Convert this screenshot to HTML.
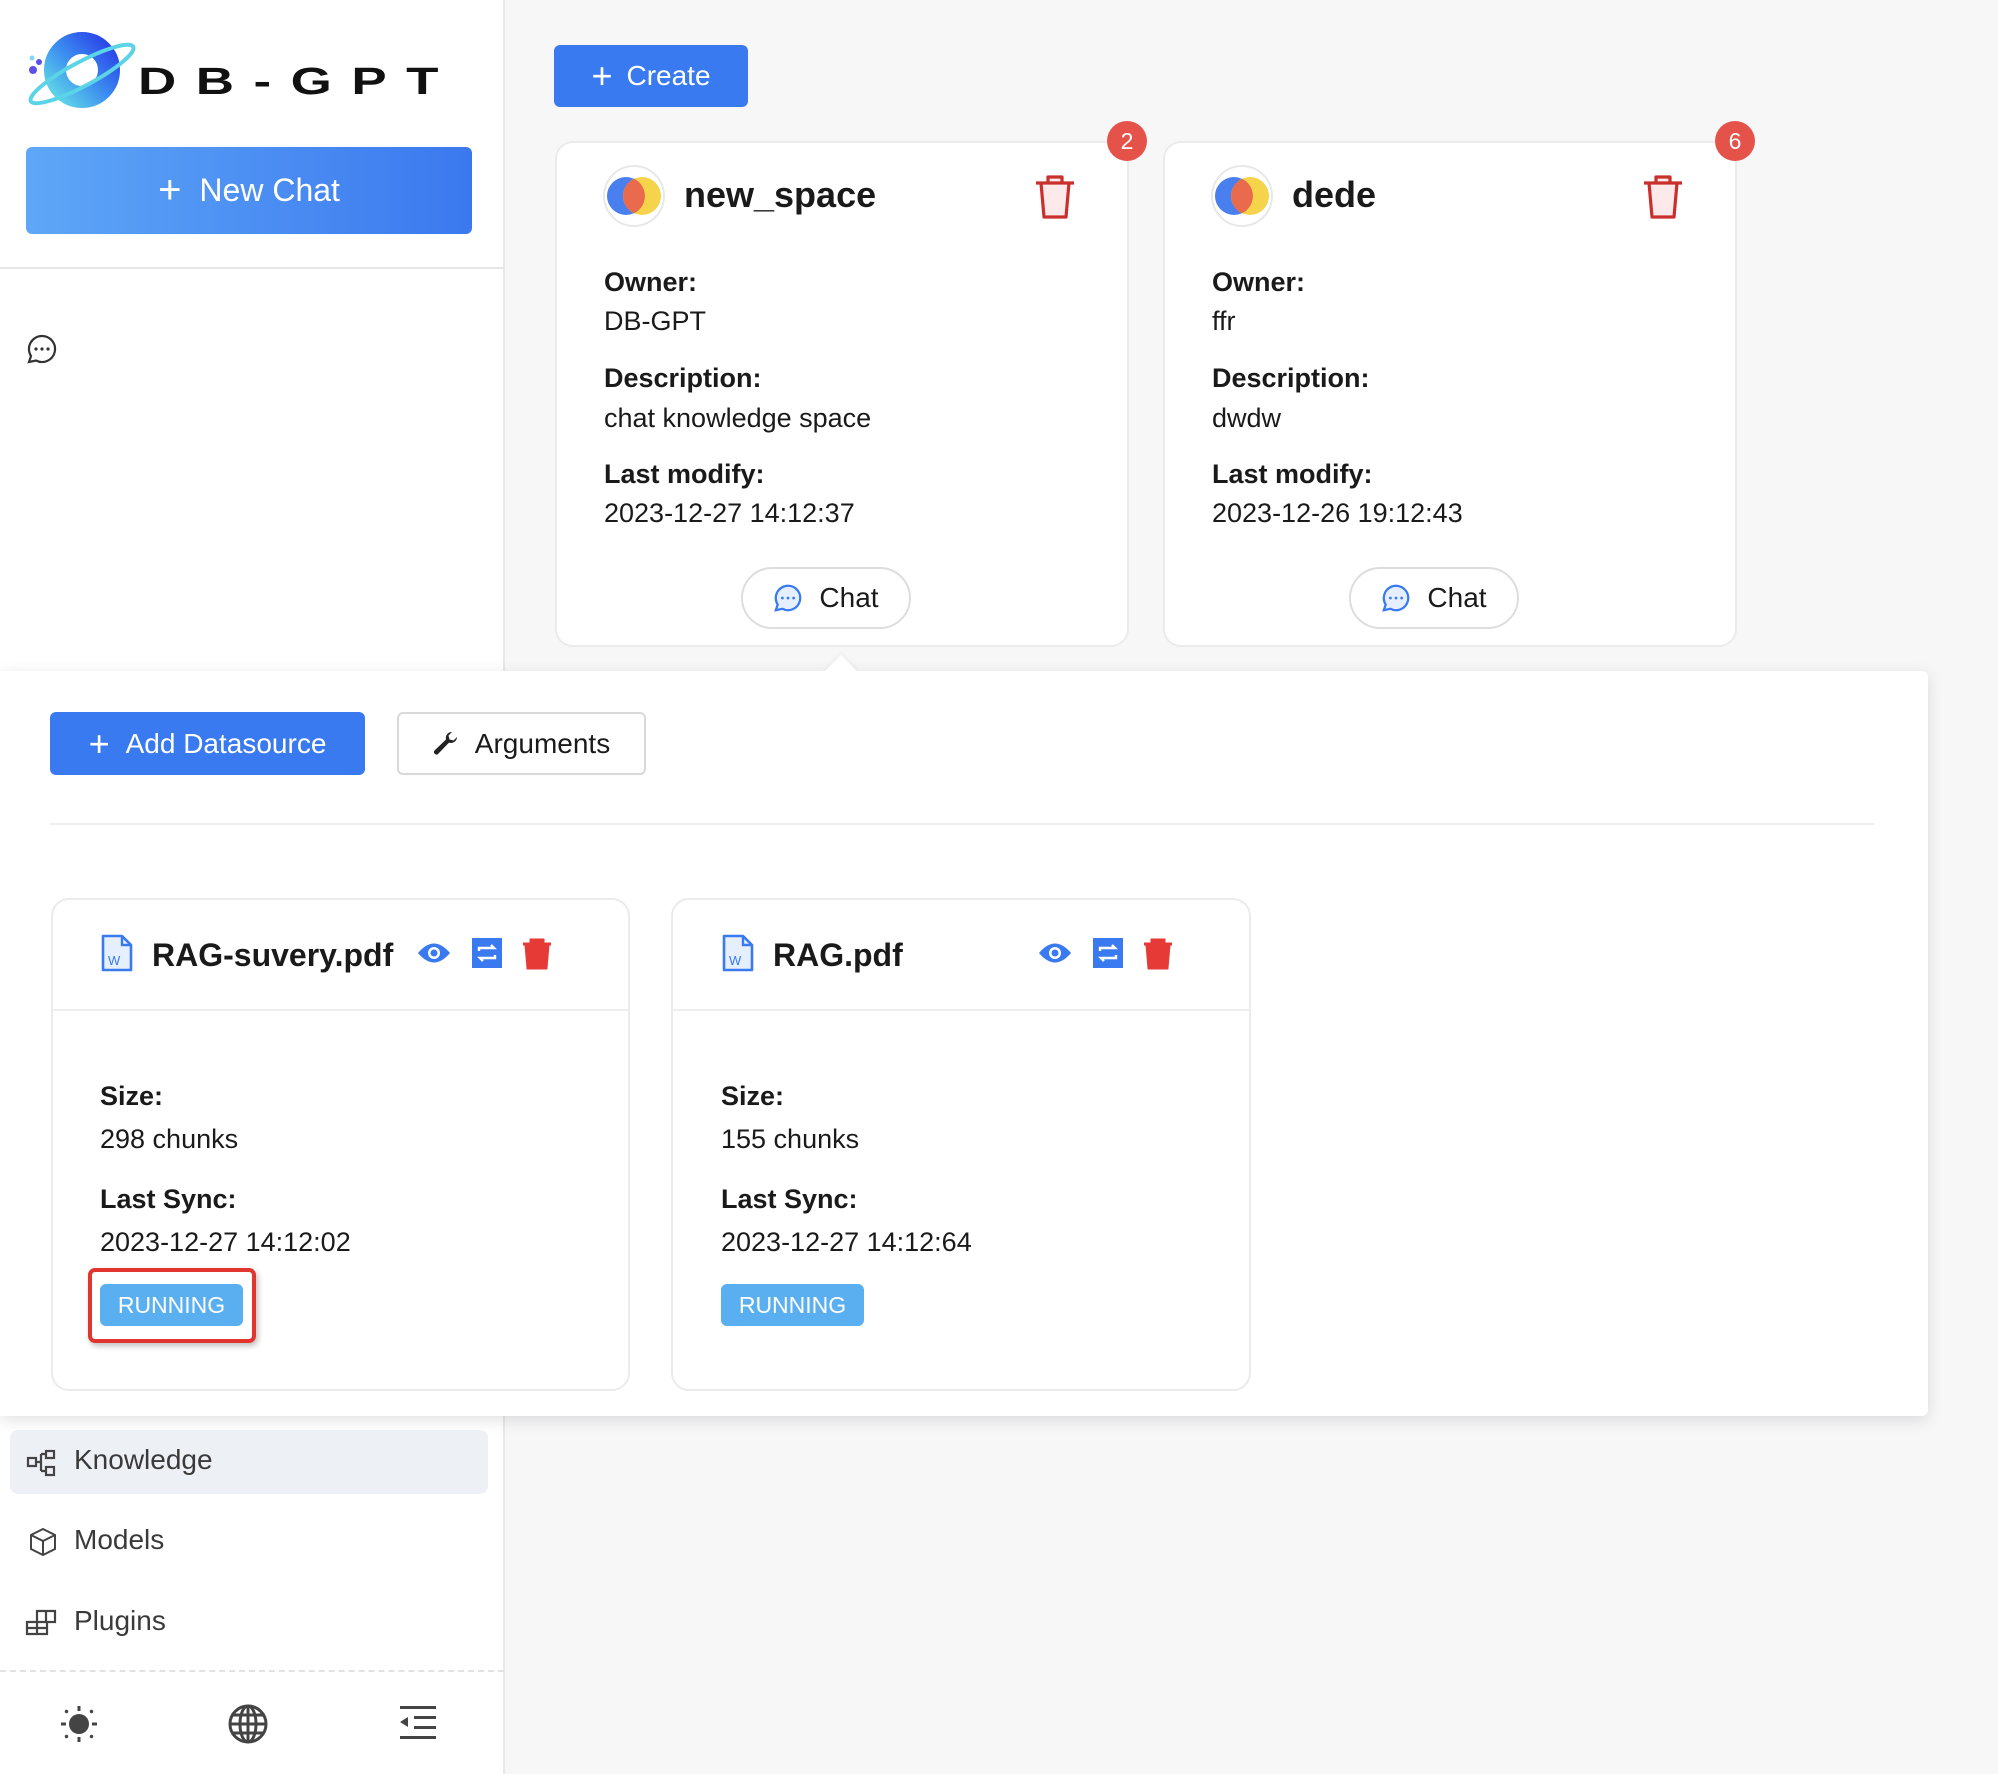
<!DOCTYPE html>
<html><head><meta charset="utf-8"><style>
*{box-sizing:border-box;margin:0;padding:0}
body{width:1998px;height:1774px;position:relative;overflow:hidden;background:#f7f7f8;font-family:"Liberation Sans",Arial,sans-serif;color:#1a1a1a}
.abs{position:absolute}
.side{left:0;top:0;width:505px;height:1774px;background:#fff;border-right:2px solid #e8e8e8}
.btn{display:flex;align-items:center;justify-content:center;color:#fff;border-radius:6px}
.card{background:#fff;border:2px solid #ebebeb;border-radius:18px}
.lbl{font-weight:bold;font-size:27px;position:absolute}
.val{font-size:27px;position:absolute}
.badge{width:40px;height:40px;border-radius:50%;background:#e5524a;color:#fff;font-size:23px;display:flex;align-items:center;justify-content:center}
.menu{font-size:28px;color:#3a3a3a;position:absolute;left:74px}
</style></head><body>
<div class="abs side"></div>
<!-- logo -->
<svg class="abs" style="left:24px;top:28px" width="440" height="85" viewBox="0 0 440 85">
<defs><linearGradient id="g1" x1="0" y1="1" x2="1" y2="0"><stop offset="0" stop-color="#5fd6e8"/><stop offset="0.5" stop-color="#3b8cf0"/><stop offset="1" stop-color="#2a44e8"/></linearGradient></defs>
<circle cx="58" cy="42" r="27" fill="none" stroke="url(#g1)" stroke-width="22"/>
<ellipse cx="58" cy="46" rx="58" ry="12" transform="rotate(-28 58 46)" fill="none" stroke="#5ad4e6" stroke-width="4"/>
<circle cx="9" cy="42" r="4" fill="#5a4fe8"/><circle cx="15" cy="34" r="3" fill="#5a4fe8"/><circle cx="8" cy="30" r="2.5" fill="#7fd8ec"/>
<text x="114" y="66" font-family="Liberation Sans" font-weight="bold" font-size="38" letter-spacing="14" textLength="320" lengthAdjust="spacingAndGlyphs" fill="#111">DB-GPT</text>
</svg>
<div class="abs btn" style="left:26px;top:147px;width:446px;height:87px;background:linear-gradient(90deg,#5ea7f7,#3b78ef);font-size:32px"><span style="font-size:40px;font-weight:300;margin-right:18px">+</span>New Chat</div>
<div class="abs" style="left:0;top:267px;width:504px;height:2px;background:#e6e6e6"></div>
<svg class="abs" style="left:26px;top:333px" width="32" height="32" viewBox="0 0 32 32"><path d="M16 3a13 13 0 1 1-6 24.5L3 29l2-6A13 13 0 0 1 16 3z" fill="none" stroke="#333" stroke-width="2.2"/><circle cx="10" cy="16" r="1.6" fill="#333"/><circle cx="16" cy="16" r="1.6" fill="#333"/><circle cx="22" cy="16" r="1.6" fill="#333"/></svg>

<div class="abs btn" style="left:554px;top:45px;width:194px;height:62px;background:#3a7af0;font-size:28px"><span style="font-size:36px;font-weight:300;margin-right:14px">+</span>Create</div>

<!-- space cards -->
<div class="abs card" style="left:555px;top:141px;width:574px;height:506px"></div>
<div class="abs card" style="left:1163px;top:141px;width:574px;height:506px"></div>
<div class="abs badge" style="left:1107px;top:121px">2</div>
<div class="abs badge" style="left:1715px;top:121px">6</div>

<svg class="abs" style="left:602px;top:164px" width="64" height="64" viewBox="0 0 64 64"><circle cx="32" cy="32" r="30" fill="#fff" stroke="#e8e8e8" stroke-width="2"/><circle cx="24" cy="32" r="19" fill="#4a7ff0"/><circle cx="40" cy="32" r="19" fill="#f5d34a"/><path d="M32 14.8a19 19 0 0 1 0 34.4 19 19 0 0 1 0-34.4z" fill="#e96a4c"/></svg>
<svg class="abs" style="left:1210px;top:164px" width="64" height="64" viewBox="0 0 64 64"><circle cx="32" cy="32" r="30" fill="#fff" stroke="#e8e8e8" stroke-width="2"/><circle cx="24" cy="32" r="19" fill="#4a7ff0"/><circle cx="40" cy="32" r="19" fill="#f5d34a"/><path d="M32 14.8a19 19 0 0 1 0 34.4 19 19 0 0 1 0-34.4z" fill="#e96a4c"/></svg>
<div class="abs" style="left:684px;top:174px;font-size:36px;font-weight:bold">new_space</div>
<div class="abs" style="left:1292px;top:174px;font-size:36px;font-weight:bold">dede</div>
<svg class="abs" style="left:1033px;top:174px" width="44" height="46" viewBox="0 0 44 46"><path d="M3 9h38M15 9V3h14v6M8 9l3 34h22l3-34" fill="#fde9e9" stroke="#c9302c" stroke-width="3.2" stroke-linejoin="round"/></svg>
<svg class="abs" style="left:1641px;top:174px" width="44" height="46" viewBox="0 0 44 46"><path d="M3 9h38M15 9V3h14v6M8 9l3 34h22l3-34" fill="#fde9e9" stroke="#c9302c" stroke-width="3.2" stroke-linejoin="round"/></svg>

<div class="lbl" style="left:604px;top:267px">Owner:</div><div class="val" style="left:604px;top:306px">DB-GPT</div>
<div class="lbl" style="left:604px;top:363px">Description:</div><div class="val" style="left:604px;top:403px">chat knowledge space</div>
<div class="lbl" style="left:604px;top:459px">Last modify:</div><div class="val" style="left:604px;top:498px">2023-12-27 14:12:37</div>
<div class="lbl" style="left:1212px;top:267px">Owner:</div><div class="val" style="left:1212px;top:306px">ffr</div>
<div class="lbl" style="left:1212px;top:363px">Description:</div><div class="val" style="left:1212px;top:403px">dwdw</div>
<div class="lbl" style="left:1212px;top:459px">Last modify:</div><div class="val" style="left:1212px;top:498px">2023-12-26 19:12:43</div>

<div class="abs" style="left:741px;top:567px;width:170px;height:62px;border:2px solid #ddd;border-radius:31px;background:#fff;display:flex;align-items:center;justify-content:center;font-size:28px"><svg width="30" height="30" viewBox="0 0 32 32" style="margin-right:16px"><path d="M16 3a13 13 0 1 1-6 24.5L3 29l2-6A13 13 0 0 1 16 3z" fill="#e6effd" stroke="#3a7af0" stroke-width="2.4"/><circle cx="10" cy="16" r="1.5" fill="#3a7af0"/><circle cx="16" cy="16" r="1.5" fill="#3a7af0"/><circle cx="22" cy="16" r="1.5" fill="#3a7af0"/></svg>Chat</div>
<div class="abs" style="left:1349px;top:567px;width:170px;height:62px;border:2px solid #ddd;border-radius:31px;background:#fff;display:flex;align-items:center;justify-content:center;font-size:28px"><svg width="30" height="30" viewBox="0 0 32 32" style="margin-right:16px"><path d="M16 3a13 13 0 1 1-6 24.5L3 29l2-6A13 13 0 0 1 16 3z" fill="#e6effd" stroke="#3a7af0" stroke-width="2.4"/><circle cx="10" cy="16" r="1.5" fill="#3a7af0"/><circle cx="16" cy="16" r="1.5" fill="#3a7af0"/><circle cx="22" cy="16" r="1.5" fill="#3a7af0"/></svg>Chat</div>

<!-- popover -->
<div class="abs" style="left:0;top:671px;width:1928px;height:745px;background:#fff;box-shadow:0 4px 16px rgba(0,0,0,0.12);border-radius:0 6px 6px 0"></div>
<div class="abs" style="left:829px;top:660px;width:24px;height:24px;background:#fff;transform:rotate(45deg);box-shadow:-2px -2px 4px rgba(0,0,0,0.04)"></div>
<div class="abs btn" style="left:50px;top:712px;width:315px;height:63px;background:#3a7af0;font-size:28px"><span style="font-size:36px;font-weight:300;margin-right:16px">+</span>Add Datasource</div>
<div class="abs" style="left:397px;top:712px;width:249px;height:63px;border:2px solid #d9d9d9;border-radius:6px;display:flex;align-items:center;justify-content:center;font-size:28px"><svg width="26" height="26" viewBox="0 0 26 26" style="margin-right:16px"><path d="M24 6a6 6 0 0 1-8 5.6L5 23a2.5 2.5 0 0 1-3.5-3.5L13 8.5A6 6 0 0 1 19 1l-3.5 3.5 1 4 4 1z" fill="#222"/></svg>Arguments</div>
<div class="abs" style="left:50px;top:823px;width:1824px;height:2px;background:#eee"></div>

<div class="abs card" style="left:51px;top:898px;width:579px;height:493px"></div>
<div class="abs card" style="left:671px;top:898px;width:580px;height:493px"></div>
<div class="abs" style="left:52px;top:1009px;width:577px;height:2px;background:#eee"></div>
<div class="abs" style="left:672px;top:1009px;width:578px;height:2px;background:#eee"></div>

<svg class="abs" style="left:101px;top:934px" width="32" height="38" viewBox="0 0 32 38"><path d="M2 2h19l9 9v25H2z" fill="#e6effd" stroke="#3a7af0" stroke-width="2.6" stroke-linejoin="round"/><path d="M21 2v9h9" fill="none" stroke="#3a7af0" stroke-width="2.4"/><text x="7" y="31" font-size="13" fill="#3a7af0" font-family="Liberation Sans">W</text></svg>
<svg class="abs" style="left:722px;top:934px" width="32" height="38" viewBox="0 0 32 38"><path d="M2 2h19l9 9v25H2z" fill="#e6effd" stroke="#3a7af0" stroke-width="2.6" stroke-linejoin="round"/><path d="M21 2v9h9" fill="none" stroke="#3a7af0" stroke-width="2.4"/><text x="7" y="31" font-size="13" fill="#3a7af0" font-family="Liberation Sans">W</text></svg>
<div class="abs" style="left:152px;top:937px;font-size:32px;font-weight:bold">RAG-suvery.pdf</div>
<div class="abs" style="left:773px;top:937px;font-size:32px;font-weight:bold">RAG.pdf</div>

<svg class="abs" style="left:417px;top:938px" width="150" height="32" viewBox="0 0 150 32">
<path d="M1 15Q17 -4 33 15Q17 34 1 15z" fill="#3a7af0"/><circle cx="17" cy="15" r="6" fill="#fff"/><circle cx="17" cy="15" r="3.5" fill="#3a7af0"/>
<rect x="55" y="0" width="30" height="30" fill="#3a7af0"/><path d="M62 13v-3h15l-3-3M78 17v3H63l3 3" fill="none" stroke="#fff" stroke-width="2.4"/>
<path d="M106 6h28M114 6V2h12v4M109 7l2 23h18l2-23z" fill="#e53a35" stroke="#e53a35" stroke-width="3"/>
</svg>
<svg class="abs" style="left:1038px;top:938px" width="150" height="32" viewBox="0 0 150 32">
<path d="M1 15Q17 -4 33 15Q17 34 1 15z" fill="#3a7af0"/><circle cx="17" cy="15" r="6" fill="#fff"/><circle cx="17" cy="15" r="3.5" fill="#3a7af0"/>
<rect x="55" y="0" width="30" height="30" fill="#3a7af0"/><path d="M62 13v-3h15l-3-3M78 17v3H63l3 3" fill="none" stroke="#fff" stroke-width="2.4"/>
<path d="M106 6h28M114 6V2h12v4M109 7l2 23h18l2-23z" fill="#e53a35" stroke="#e53a35" stroke-width="3"/>
</svg>

<div class="lbl" style="left:100px;top:1081px">Size:</div><div class="val" style="left:100px;top:1124px">298 chunks</div>
<div class="lbl" style="left:100px;top:1184px">Last Sync:</div><div class="val" style="left:100px;top:1227px">2023-12-27 14:12:02</div>
<div class="lbl" style="left:721px;top:1081px">Size:</div><div class="val" style="left:721px;top:1124px">155 chunks</div>
<div class="lbl" style="left:721px;top:1184px">Last Sync:</div><div class="val" style="left:721px;top:1227px">2023-12-27 14:12:64</div>
<div class="abs" style="left:88px;top:1268px;width:168px;height:75px;border:4px solid #e0362e;border-radius:7px;box-shadow:2px 3px 6px rgba(0,0,0,0.25)"></div>
<div class="abs" style="left:100px;top:1284px;width:143px;height:42px;background:#5aaff0;border-radius:6px;color:#fff;font-size:23px;display:flex;align-items:center;justify-content:center">RUNNING</div>
<div class="abs" style="left:721px;top:1284px;width:143px;height:42px;background:#5aaff0;border-radius:6px;color:#fff;font-size:23px;display:flex;align-items:center;justify-content:center">RUNNING</div>

<!-- menu -->
<div class="abs" style="left:10px;top:1430px;width:478px;height:64px;background:#edf0f5;border-radius:8px"></div>
<svg class="abs" style="left:26px;top:1449px" width="32" height="28" viewBox="0 0 32 28" fill="none" stroke="#444" stroke-width="2.2"><rect x="2" y="9" width="8" height="8"/><rect x="20" y="2" width="8" height="7"/><rect x="20" y="18" width="8" height="8"/><path d="M10 13h5M15 5v17M15 5h5M15 22h5"/></svg>
<div class="menu" style="top:1444px">Knowledge</div>
<svg class="abs" style="left:28px;top:1527px" width="30" height="30" viewBox="0 0 30 30" fill="none" stroke="#444" stroke-width="2"><path d="M15 2l12 6v14l-12 6-12-6V8z M3 8l12 6 12-6 M15 14v14"/></svg>
<div class="menu" style="top:1524px">Models</div>
<svg class="abs" style="left:25px;top:1608px" width="34" height="28" viewBox="0 0 34 28" fill="none" stroke="#444" stroke-width="2.2"><path d="M2 14h20v12H2z M12 14v12 M2 20h20 M12 14V3h18v11h-8 M21 3v11"/></svg>
<div class="menu" style="top:1605px">Plugins</div>
<div class="abs" style="left:0;top:1670px;width:504px;border-top:2px dashed #e2e2e2"></div>

<svg class="abs" style="left:60px;top:1705px" width="38" height="38" viewBox="0 0 38 38" fill="#444"><circle cx="19" cy="19" r="10"/><rect x="17.5" y="1" width="3" height="5"/><rect x="17.5" y="32" width="3" height="5"/><rect x="1" y="17.5" width="5" height="3"/><rect x="32" y="17.5" width="5" height="3"/><circle cx="6.5" cy="6.5" r="1.7"/><circle cx="31.5" cy="6.5" r="1.7"/><circle cx="6.5" cy="31.5" r="1.7"/><circle cx="31.5" cy="31.5" r="1.7"/></svg>
<svg class="abs" style="left:228px;top:1704px" width="40" height="40" viewBox="0 0 40 40" fill="none" stroke="#444" stroke-width="3"><circle cx="20" cy="20" r="18"/><ellipse cx="20" cy="20" rx="8" ry="18"/><path d="M20 2v36M2 20h36M5 11h30M5 29h30"/></svg>
<svg class="abs" style="left:400px;top:1706px" width="38" height="34" viewBox="0 0 38 34" fill="#444"><rect x="0" y="0" width="36" height="3"/><rect x="14" y="10" width="22" height="3"/><rect x="14" y="20" width="22" height="3"/><rect x="0" y="30" width="36" height="3"/><path d="M0 16l8-5v10z"/></svg>
</body></html>
